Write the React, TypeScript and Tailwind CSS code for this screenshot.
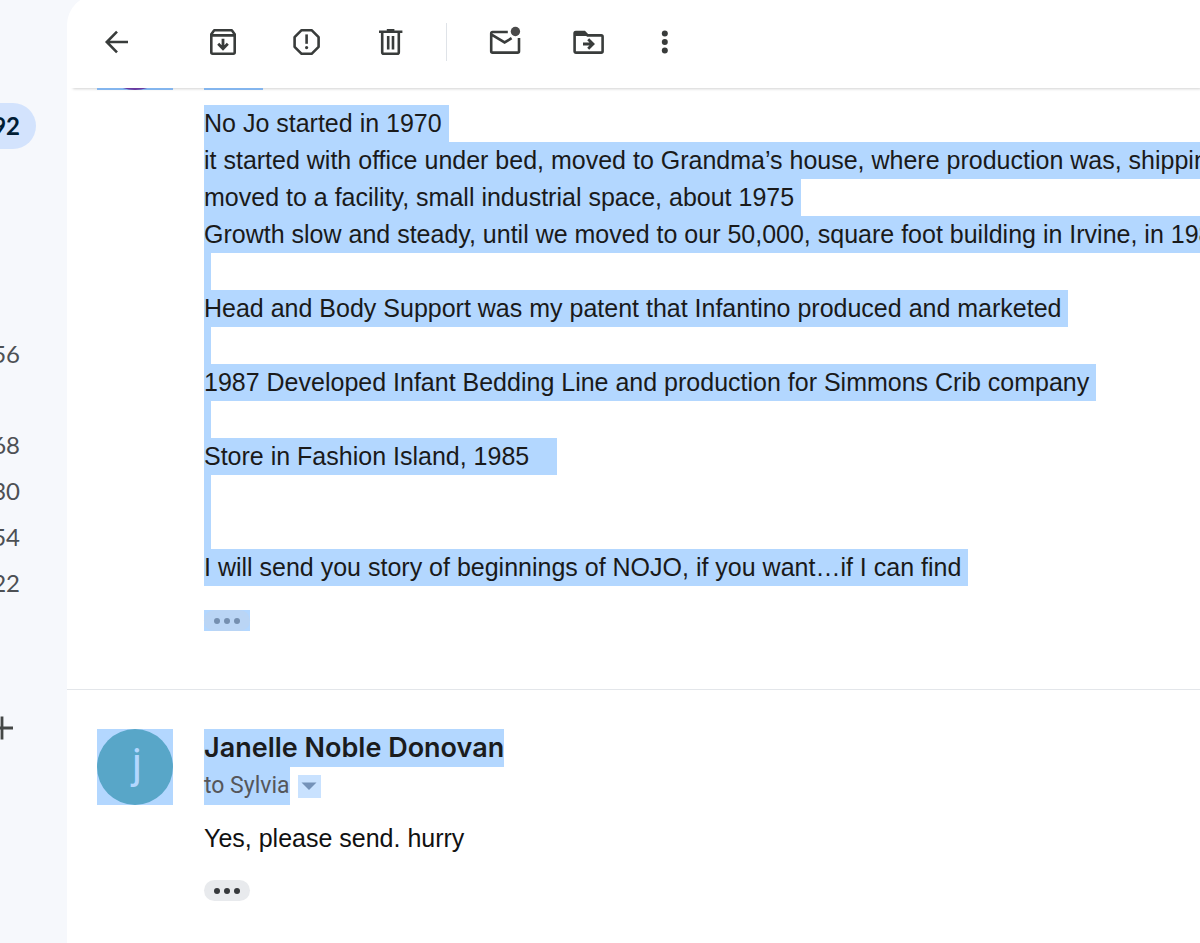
import React from "react";

const lines = [
  "No Jo started in 1970 ",
  "it started with office under bed, moved to Grandma’s house, where production was, shipping, ",
  "moved to a facility, small industrial space, about 1975 ",
  "Growth slow and steady, until we moved to our 50,000, square foot building in Irvine, in 1985 ",
  " ",
  "Head and Body Support was my patent that Infantino produced and marketed ",
  " ",
  "1987 Developed Infant Bedding Line and production for Simmons Crib company ",
  " ",
  "Store in Fashion Island, 1985    ",
  " ",
  " ",
  "I will send you story of beginnings of NOJO, if you want…if I can find ",
];

function ToolButton({ label, children }: { label: string; children: React.ReactNode }) {
  return (
    <button type="button" aria-label={label} className="size-[38px] shrink-0">
      <svg viewBox="0 0 38 38" className="size-full" fill="none" stroke="#393c3b" strokeWidth="2.6">
        {children}
      </svg>
    </button>
  );
}

function Toolbar() {
  return (
    <header className="relative z-10 -mr-1 ml-[3px] flex h-[93px] items-center rounded-tl-[30px] bg-white pt-[1px] pl-[27px] shadow-[0_4px_3px_-3px_rgba(0,0,0,0.18)]">
      <ToolButton label="Back">
        <path d="M20 8.7 9.8 19 20 29.3M10 19h21" />
      </ToolButton>
      <div className="ml-[69px] flex gap-[46px]">
        <ToolButton label="Archive">
          <path d="M7.3 11.2 10.2 7.3h17.6l2.9 3.9v18.1q0 1.4-1.4 1.4H8.7q-1.4 0-1.4-1.4zM7.3 12.4h23.4" strokeLinejoin="round" />
          <path d="M19 15.8v10M14.2 20.8l4.8 4.9 4.8-4.9" strokeWidth="2.8" />
        </ToolButton>
        <ToolButton label="Report spam">
          <path d="M13.6 7.2h10l7 7v9.6l-7 7h-10l-7-7v-9.6z" strokeLinejoin="round" />
          <path d="M18.6 11.4v9.4" />
          <circle cx="18.6" cy="24.6" r="1.6" fill="#393c3b" stroke="none" />
        </ToolButton>
        <ToolButton label="Delete">
          <path d="M7 8.8h23.4M14.8 7.3h7.6M10.2 9v20.2q0 1.5 1.5 1.5h13.6q1.5 0 1.5-1.5V9M16.2 13v13.4M21 13v13.4" />
        </ToolButton>
      </div>
      <div className="ml-[36px] h-[38px] w-px bg-[#dfe3e8]" />
      <div className="ml-[39px] flex gap-[46px]">
        <ToolButton label="Mark as unread">
          <path d="M21.8 9H6.6Q5.2 9 5.2 10.4v17.8q0 1.4 1.4 1.4h25q1.4 0 1.4-1.4V15M5.2 11.4l13.4 8 7-4.2" />
          <circle cx="29.4" cy="8.5" r="4.7" fill="#4a4a4a" stroke="none" />
        </ToolButton>
        <ToolButton label="Move to">
          <path d="M4.6 10.2Q4.6 9 5.8 9h8.6l3.2 3.4h13.6q1.4 0 1.4 1.4v14.4q0 1.4-1.4 1.4H6q-1.4 0-1.4-1.4z" />
          <path d="M4.6 8.6h9.8l4.2 4.4h-14z" fill="#393c3b" stroke="none" />
          <path d="M13 21h9.6M18.2 16.2l4.8 4.8-4.8 4.8" strokeWidth="2.8" />
        </ToolButton>
        <div className="-ml-2 flex">
          <ToolButton label="More">
            <g fill="#393c3b" stroke="none">
              <circle cx="18.8" cy="10.5" r="3" />
              <circle cx="18.8" cy="19" r="3" />
              <circle cx="18.8" cy="27.5" r="3" />
            </g>
          </ToolButton>
        </div>
      </div>
    </header>
  );
}

function Count({ value }: { value: string }) {
  return (
    <a href="#" className="flex h-[46px] w-5 items-center justify-end text-[24px] text-[#4d5054]">
      {value}
    </a>
  );
}

function Sidebar() {
  return (
    <nav className="w-[67px] shrink-0 overflow-hidden pt-[103px] font-['Lato',sans-serif]">
      <a href="#" className="flex h-[46px] w-9 items-center justify-end rounded-r-full bg-[#d3e3fd] pr-4 text-[24px] font-bold text-[#001d35]">
        92
      </a>
      <div className="mt-[182px]">
        <Count value="56" />
      </div>
      <div className="mt-[45px]">
        <Count value="68" />
        <Count value="30" />
        <Count value="54" />
        <Count value="22" />
      </div>
      <button type="button" aria-label="Create label" className="mt-[109px] -ml-3 block size-[26px]">
        <svg viewBox="0 0 26 26" className="size-full" stroke="#444746" strokeWidth="2.8">
          <path d="M2 13h23M14 1.5v23" />
        </svg>
      </button>
    </nav>
  );
}

function Dots({ className }: { className: string }) {
  return (
    <button type="button" aria-label="Show trimmed content" className={`flex h-[21px] w-[46px] items-center justify-center gap-1 rounded-full ${className}`}>
      <span className="size-[6px] rounded-full bg-current" />
      <span className="size-[6px] rounded-full bg-current" />
      <span className="size-[6px] rounded-full bg-current" />
    </button>
  );
}

export default function App() {
  return (
    <div className="flex min-h-screen overflow-hidden bg-[#f6f8fc] font-['Liberation_Sans',sans-serif]">
      <Sidebar />
      <main className="-mt-[5px] min-w-0 flex-1 overflow-hidden rounded-tl-[30px] bg-white">
        <Toolbar />
        <article>
          <div className="relative z-20 flex h-[2px] items-end gap-[31px] overflow-hidden pl-[30px]">
            <div className="size-[76px] shrink-0 bg-[#83b5ee]">
              <div className="size-full rounded-full bg-[#6a3aa0]" />
            </div>
            <div className="h-[38px] w-[59px] bg-[#83b5ee]" />
          </div>
          <div className="mt-[15px] pl-[137px] text-[25px] leading-[37px] text-[#1a1a1a]">
            {lines.map((line, i) => (
              <p key={i} className="w-max bg-[#b3d7ff] whitespace-pre">
                {line}
              </p>
            ))}
          </div>
          <div className="mt-[24px] ml-[137px] w-max bg-[#b3d7ff]">
            <Dots className="bg-[#bad5f5] text-[#758fb0]" />
          </div>
        </article>
        <article className="mt-[58px] flex gap-[31px] border-t border-[#e3e6ea] pt-[39px] pl-[30px]">
          <div className="size-[76px] shrink-0 bg-[#b3d7ff]">
            <div className="flex size-full items-center justify-center rounded-full bg-[#58a6c8] pb-2 pl-1 font-['Roboto',sans-serif] text-[42px] text-[#b3d7ff]">
              j
            </div>
          </div>
          <div className="min-w-0 flex-1">
            <h3 className="w-max bg-[#b3d7ff] font-['Inter',sans-serif] text-[27px] leading-[38px] font-semibold text-[#1b1c1d]">
              Janelle Noble Donovan
            </h3>
            <div className="flex items-center gap-2">
              <span className="bg-[#b3d7ff] font-['Roboto',sans-serif] text-[23px] leading-[38px] text-[#55565a]">to Sylvia</span>
              <button type="button" aria-label="Show details" className="flex size-[23px] items-center justify-center bg-[#c9e2ff]">
                <svg viewBox="0 0 16 8" className="h-2 w-4" fill="#7592b8">
                  <path d="M0.5 0.5h15L8 8z" />
                </svg>
              </button>
            </div>
            <p className="mt-[15px] text-[25px] leading-[37px] text-[#111]">Yes, please send. hurry</p>
            <Dots className="mt-[23px] bg-[#e8eaed] text-[#36393c]" />
          </div>
        </article>
      </main>
    </div>
  );
}
